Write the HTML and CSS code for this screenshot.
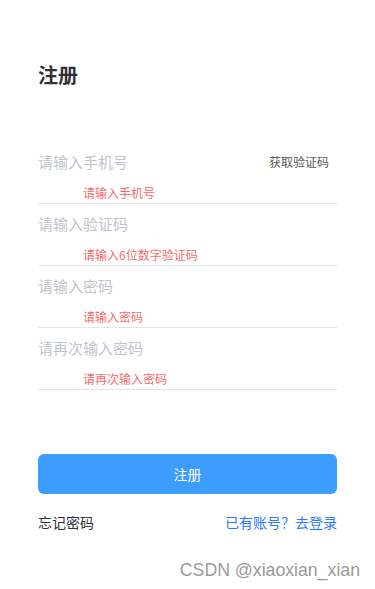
FILE: index.html
```html
<!DOCTYPE html>
<html lang="zh">
<head>
<meta charset="utf-8">
<link rel="stylesheet" href="styles.css">
</head>
<body>
<div class="page">
  <h1 class="title">注册</h1>
  <div class="form">
    <div class="item">
      <div class="input-row">
        <span class="placeholder">请输入手机号</span>
        <span class="code-btn">获取验证码</span>
      </div>
      <div class="error">请输入手机号</div>
    </div>
    <div class="item">
      <div class="input-row"><span class="placeholder">请输入验证码</span></div>
      <div class="error">请输入6位数字验证码</div>
    </div>
    <div class="item">
      <div class="input-row"><span class="placeholder">请输入密码</span></div>
      <div class="error">请输入密码</div>
    </div>
    <div class="item">
      <div class="input-row"><span class="placeholder">请再次输入密码</span></div>
      <div class="error">请再次输入密码</div>
    </div>
  </div>
  <button class="submit">注册</button>
  <div class="links">
    <span class="forgot">忘记密码</span>
    <span class="login">已有账号？去登录</span>
  </div>
  <div class="watermark">CSDN @xiaoxian_xian</div>
</div>
</body>
</html>
```
FILE: styles.css
```css
html, body {
  margin: 0;
  padding: 0;
  background: #ffffff;
}
body {
  font-family: "Noto Sans CJK SC", "Liberation Sans", sans-serif;
}
.page {
  width: 375px;
  height: 589px;
  box-sizing: border-box;
  padding: 0 38px;
  display: flex;
  flex-direction: column;
}
.title {
  margin: 62px 0 0 0;
  font-size: 20px;
  line-height: 26px;
  font-weight: bold;
  color: #303133;
}
.form {
  margin-top: 54px;
  display: flex;
  flex-direction: column;
}
.item {
  height: 62px;
  box-sizing: border-box;
  border-bottom: 1px solid #e4e4e4;
  display: flex;
  flex-direction: column;
}
.input-row {
  height: 40px;
  display: flex;
  align-items: center;
  justify-content: space-between;
}
.placeholder {
  font-size: 15px;
  color: #c0c4cc;
  line-height: 20px;
}
.code-btn {
  font-size: 12px;
  color: #555;
  margin-right: 8px;
  line-height: 16px;
}
.error {
  height: 21px;
  display: flex;
  align-items: center;
  padding-left: 45px;
  font-size: 12px;
  line-height: 16px;
  color: #f56c6c;
}
.submit {
  margin-top: 64px;
  height: 40px;
  border: none;
  border-radius: 6px;
  background: #3c9cff;
  color: #ffffff;
  font-family: "Noto Sans CJK SC", "Liberation Sans", sans-serif;
  font-size: 14px;
  padding: 0;
}
.links {
  margin-top: 18px;
  display: flex;
  justify-content: space-between;
  font-size: 14px;
  line-height: 20px;
}
.forgot { color: #303133; }
.login { color: #2979ff; }
.watermark {
  margin-top: 28px;
  align-self: flex-end;
  margin-right: -23px;
  font-family: "Liberation Sans", Arial, sans-serif;
  font-size: 17.7px;
  line-height: 20px;
  color: #9a9a9a;
}
```
